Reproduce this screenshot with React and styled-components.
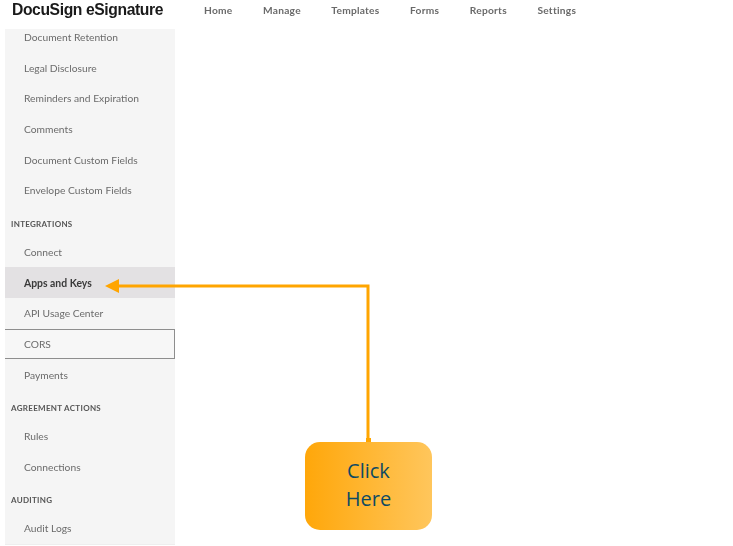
import React from "react";
import styled, { createGlobalStyle } from "styled-components";

const Global = createGlobalStyle`
  html, body { margin: 0; padding: 0; background: #fff; }
  body { font-family: "Lato", "Liberation Sans", sans-serif; }
`;

const Page = styled.div`
  position: relative;
  width: 733px;
  height: 546px;
  overflow: hidden;
  background: #fff;
`;

const Header = styled.header`
  height: 29px;
  display: flex;
  align-items: flex-start;
  padding: 1px 0 0 12px;
  box-sizing: border-box;
  filter: blur(0.3px);
`;

const Logo = styled.div`
  width: 192px;
  font-family: "Liberation Sans", Arial, sans-serif;
  font-size: 15.7px;
  line-height: 18px;
  font-weight: 700;
  letter-spacing: -0.4px;
  color: #1a1a1a;
`;

const Nav = styled.nav`
  display: flex;
  gap: 30.5px;
  padding-top: 2px;
`;

const NavLink = styled.a`
  font-size: 10.2px;
  line-height: 14px;
  font-weight: 700;
  color: #6a6a6a;
  letter-spacing: 0.25px;
`;

const Sidebar = styled.aside`
  width: 170px;
  height: 516px;
  margin-left: 5px;
  background: #f5f5f5;
  border-bottom: 1px solid #eeeeee;
  box-sizing: border-box;
  overflow: hidden;
  filter: blur(0.3px);
`;

const SideList = styled.div`
  display: flex;
  flex-direction: column;
  margin-top: -7.3px;
`;

const Item = styled.div`
  height: 30.7px;
  box-sizing: border-box;
  display: flex;
  align-items: center;
  padding-left: 19px;
  font-size: ${(p) => (p.$active ? "10.4px" : "10.25px")};
  color: ${(p) => (p.$active ? "#3a3a3a" : "#6b6b6b")};
  font-weight: ${(p) => (p.$active ? 700 : 400)};
  background: ${(p) => (p.$active ? "#e3e1e3" : "transparent")};
  ${(p) => p.$outlined && `
    border: 1px solid #8e8e8e;
    border-left: 0;
    background: #f7f7f7;
  `}
`;

const Heading = styled.div`
  height: 30.7px;
  box-sizing: border-box;
  display: flex;
  align-items: center;
  padding: 6px 0 0 6px;
  font-size: 8px;
  font-weight: 700;
  letter-spacing: 0.3px;
  color: #555;
`;

const Arrow = styled.svg`
  position: absolute;
  inset: 0;
  pointer-events: none;
`;

const Callout = styled.div`
  position: absolute;
  left: 305px;
  top: 442px;
  width: 127px;
  height: 88px;
  padding-bottom: 3px;
  box-sizing: border-box;
  border-radius: 15px;
  background: linear-gradient(90deg, #ffa70a 0%, #ffc65c 100%);
  color: #0e4a63;
  font-family: "Open Sans", "Noto Sans", sans-serif;
  font-size: 20px;
  line-height: 28px;
  text-align: center;
  display: flex;
  align-items: center;
  justify-content: center;
`;

const navItems = ["Home", "Manage", "Templates", "Forms", "Reports", "Settings"];

const rows = [
  { t: "Document Retention" },
  { t: "Legal Disclosure" },
  { t: "Reminders and Expiration" },
  { t: "Comments" },
  { t: "Document Custom Fields" },
  { t: "Envelope Custom Fields" },
  { t: "INTEGRATIONS", h: true },
  { t: "Connect" },
  { t: "Apps and Keys", active: true },
  { t: "API Usage Center" },
  { t: "CORS", outlined: true },
  { t: "Payments" },
  { t: "AGREEMENT ACTIONS", h: true },
  { t: "Rules" },
  { t: "Connections" },
  { t: "AUDITING", h: true },
  { t: "Audit Logs" },
];

export default function App() {
  return (
    <Page>
      <Global />
      <Header>
        <Logo>DocuSign eSignature</Logo>
        <Nav>
          {navItems.map((n) => (
            <NavLink key={n}>{n}</NavLink>
          ))}
        </Nav>
      </Header>
      <Sidebar>
        <SideList>
          {rows.map((r) =>
            r.h ? (
              <Heading key={r.t}>{r.t}</Heading>
            ) : (
              <Item key={r.t} $active={r.active} $outlined={r.outlined}>
                {r.t}
              </Item>
            )
          )}
        </SideList>
      </Sidebar>
      <Arrow width="733" height="546" viewBox="0 0 733 546">
        <path d="M368 442V286H118" fill="none" stroke="#ffa500" strokeWidth="3" />
        <rect x="366" y="438" width="5" height="4" fill="#ffa500" />
        <path d="M105 286L119 279V293Z" fill="#ffa500" />
      </Arrow>
      <Callout>
        Click
        <br />
        Here
      </Callout>
    </Page>
  );
}
